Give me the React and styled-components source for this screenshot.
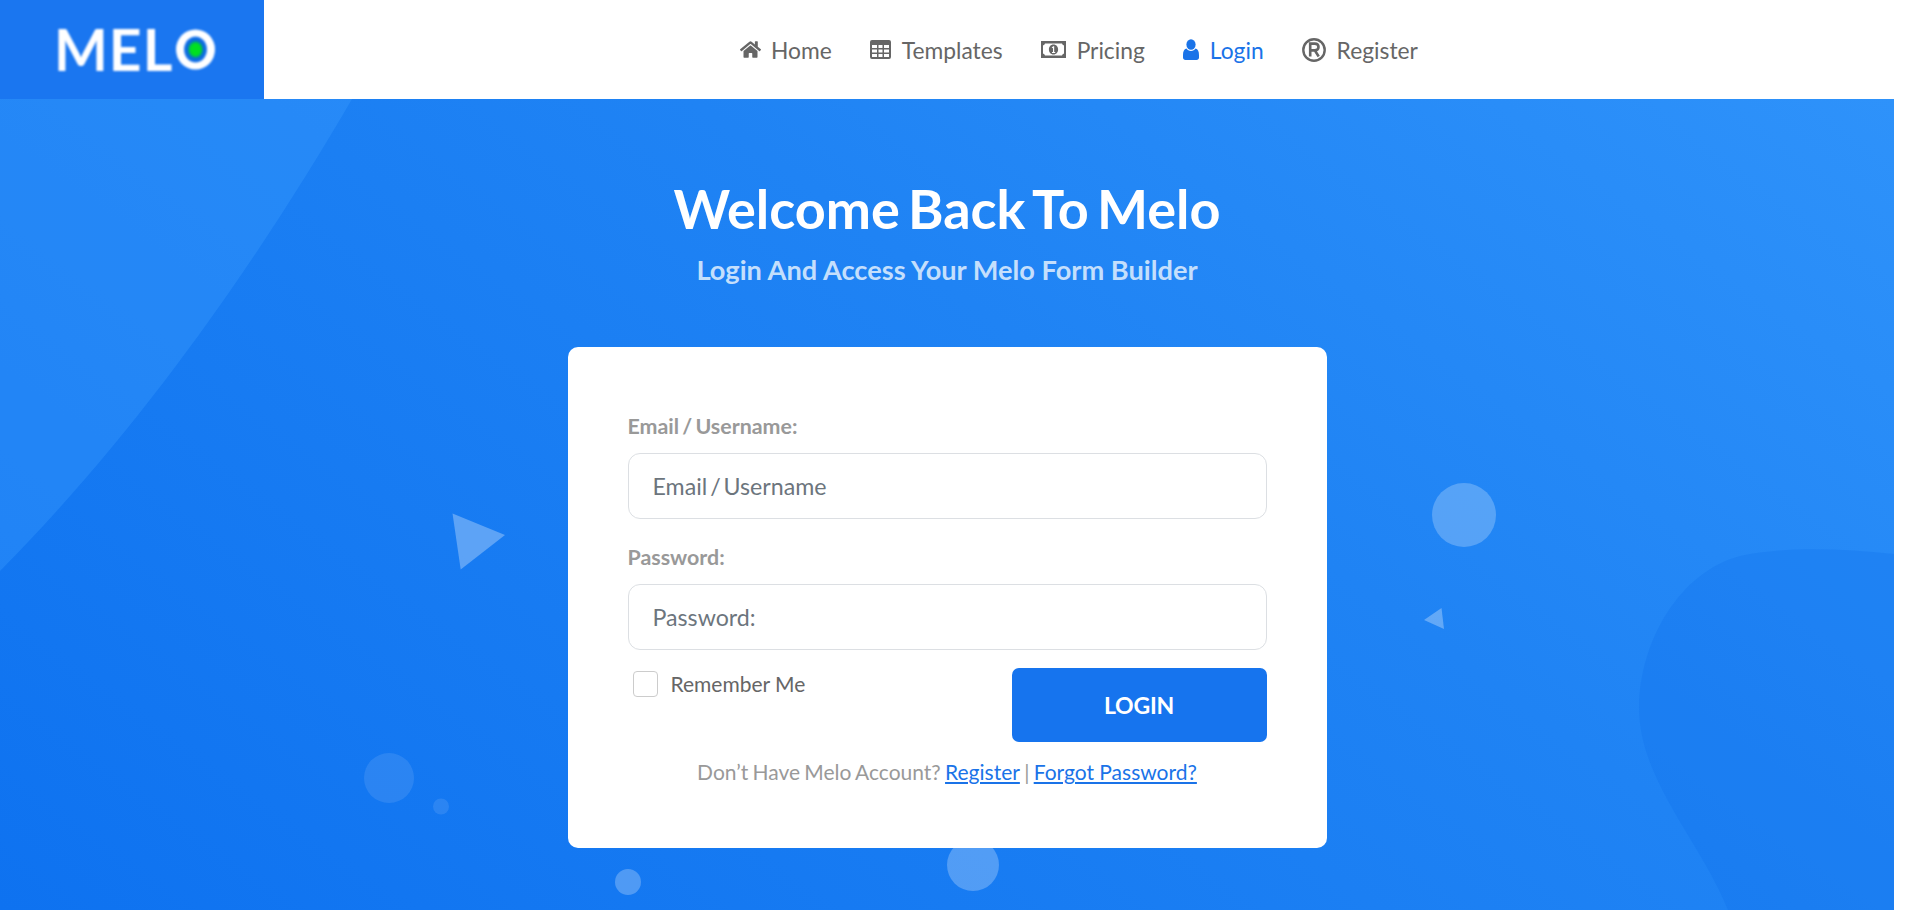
import React from "react";
import styled, { createGlobalStyle } from "styled-components";
import { FaHome } from "react-icons/fa";

const Global = createGlobalStyle`
  html, body { margin: 0; padding: 0; height: 100%; overflow: hidden; background: #fff; }
  body { font-family: Lato, "Liberation Sans", sans-serif; }
  * { box-sizing: border-box; }
  #root { height: 100%; }
`;

const Page = styled.div`
  display: flex;
  flex-direction: column;
  width: 1894px;
  height: 910px;
`;

const Header = styled.header`
  display: flex;
  align-items: center;
  flex: 0 0 99px;
  background: #fff;
`;

const LogoBlock = styled.a`
  flex: 0 0 264px;
  height: 99px;
  background: #1a76f0;
  display: flex;
  align-items: center;
  padding-left: 54px;
`;

const LogoWord = styled.span`
  display: flex;
  align-items: center;
  gap: 2px;
  color: #fff;
  font-family: Lato, sans-serif;
  font-size: 57px;
  line-height: 1;
  font-weight: 700;
  letter-spacing: 1px;
  filter: blur(0.8px);
`;

const Nav = styled.nav`
  display: flex;
  align-items: center;
  gap: 38px;
  margin-left: 476px;
`;

const NavItem = styled.a`
  display: flex;
  align-items: center;
  gap: ${(p) => p.$gap || 11}px;
  font-size: 22.8px;
  line-height: 30px;
  color: ${(p) => (p.$active ? "#1a73e8" : "#666")};
  svg { display: block; flex: none; }
`;

const Hero = styled.main`
  position: relative;
  flex: 1;
  overflow: hidden;
  display: flex;
  flex-direction: column;
  align-items: center;
  padding-top: 79px;
  background: linear-gradient(36deg, #0e72f0 0%, #1f83f4 60%, #2e92fa 100%);
`;

const Decor = styled.svg`
  position: absolute;
  inset: 0;
  width: 100%;
  height: 100%;
`;

const Title = styled.h1`
  position: relative;
  margin: 0;
  font-size: 54px;
  line-height: 62px;
  font-weight: 700;
  word-spacing: -5px;
  color: #fff;
`;

const Subtitle = styled.p`
  position: relative;
  margin: 13px 0 0;
  font-size: 27.2px;
  line-height: 34px;
  font-weight: 700;
  color: #c4dffc;
`;

const Card = styled.section`
  position: relative;
  width: 759px;
  height: 501px;
  margin-top: 60px;
  padding: 64px 60px 0;
  background: #fff;
  border-radius: 10px;
`;

const Label = styled.label`
  display: block;
  font-size: 21.4px;
  line-height: 30px;
  font-weight: 700;
  word-spacing: -2px;
  color: #999;
`;

const Input = styled.input`
  display: block;
  width: 100%;
  height: 66px;
  margin: 12px 0 ${(p) => p.$after || 0}px;
  padding: 0 24px;
  border: 1px solid #dcdfe3;
  border-radius: 12px;
  background: #fff;
  font: 400 23.2px Lato, sans-serif;
  word-spacing: -3px;
  outline: none;
  &::placeholder { color: #6c757d; opacity: 1; }
`;

const ActionRow = styled.div`
  display: flex;
  justify-content: space-between;
  align-items: flex-start;
  margin-top: 18px;
`;

const Remember = styled.label`
  display: flex;
  align-items: center;
  gap: 13px;
  margin: 3px 0 0 5px;
  font-size: 21px;
  line-height: 26px;
  color: #666;
`;

const Check = styled.input.attrs({ type: "checkbox" })`
  appearance: none;
  width: 25px;
  height: 26px;
  margin: 0;
  background: #fff;
  border: 1px solid #ccc;
  border-radius: 4px;
`;

const Submit = styled.button`
  width: 255px;
  height: 74px;
  border: 0;
  border-radius: 7px;
  background: #1674ee;
  color: #fff;
  font: 700 23px Lato, sans-serif;
  letter-spacing: -0.2px;
`;

const Foot = styled.p`
  margin: 15px 0 0;
  text-align: center;
  font-size: 21px;
  line-height: 30px;
  word-spacing: -1.1px;
  color: #999;
`;

const FootLink = styled.a`
  color: #1a73e8;
  text-decoration: underline;
  word-spacing: 0;
`;

const TableIcon = () => (
  <svg width="21" height="19" viewBox="0 0 21 19" fill="#666">
    <path fillRule="evenodd" d="M2 0h17a2 2 0 0 1 2 2v15a2 2 0 0 1-2 2H2a2 2 0 0 1-2-2V2a2 2 0 0 1 2-2zM2 5v3h5V5zm6.500 0v3h4V5zm5.500 0v3h5V5zM2 9.500v3h5v-3zm6.500 0v3h4v-3zm5.500 0v3h5v-3zM2 14v3h5v-3zm6.500 0v3h4v-3zm5.500 0v3h5v-3z" />
  </svg>
);

const MoneyIcon = () => (
  <svg width="25" height="17" viewBox="0 0 25 17" fill="#666">
    <path fillRule="evenodd" d="M0 0h25v17H0zM4 2.500a2.500 2.500 0 0 1-2 2v8a2.500 2.500 0 0 1 2 2h17a2.500 2.500 0 0 1 2-2v-8a2.500 2.500 0 0 1-2-2z" />
    <path fillRule="evenodd" d="M12.500 3.500c2.800 0 4.600 2.200 4.600 5s-1.800 5-4.600 5-4.600-2.200-4.600-5 1.800-5 4.600-5zM11 11v1h3.200v-1h-1V5.200h-1l-1.500 1.300.6.700.7-.5V11z" />
  </svg>
);

const UserIcon = () => (
  <svg width="16" height="21" viewBox="0 0 16 21" fill="#1a73e8">
    <ellipse cx="8" cy="5.500" rx="4.600" ry="5.300" />
    <path d="M3.400 9.500C4.500 11 6 12 8 12s3.500-1 4.600-2.500C15 10.200 16 12.500 16 16v2.500c0 1.500-1 2.500-2.500 2.500h-11C1 21 0 20 0 18.500V16c0-3.500 1-5.800 3.400-6.500z" />
  </svg>
);

const RegisteredIcon = () => (
  <svg width="24" height="24" viewBox="0 0 24 24" fill="none" stroke="#666">
    <circle cx="12" cy="12" r="10.700" strokeWidth="2.400" />
    <path d="M8.200 18.500V5.600h4.600c2.300 0 3.700 1.400 3.700 3.400s-1.400 3.400-3.700 3.400H8.200M12.800 12.400l3.900 6.100" strokeWidth="2.600" />
  </svg>
);

const LogoO = () => (
  <svg width="41" height="41" viewBox="0 0 41 41" style={{ display: "block" }}>
    <defs>
      <radialGradient id="logo-core">
        <stop offset="0" stopColor="#00e020" />
        <stop offset="0.45" stopColor="#00e020" />
        <stop offset="0.7" stopColor="#0868d8" />
        <stop offset="1" stopColor="#1a76f0" />
      </radialGradient>
    </defs>
    <ellipse cx="20.500" cy="20.500" rx="19.500" ry="20" fill="#fff" />
    <ellipse cx="20.500" cy="20.500" rx="11.500" ry="13" fill="url(#logo-core)" />
  </svg>
);

export default function App() {
  return (
    <>
      <Global />
      <Page>
        <Header>
          <LogoBlock>
            <LogoWord>
              MEL
              <LogoO />
            </LogoWord>
          </LogoBlock>
          <Nav>
            <NavItem $gap={10}>
              <FaHome size={21} color="#666" />
              Home
            </NavItem>
            <NavItem>
              <TableIcon />
              Templates
            </NavItem>
            <NavItem>
              <MoneyIcon />
              Pricing
            </NavItem>
            <NavItem $active>
              <UserIcon />
              Login
            </NavItem>
            <NavItem>
              <RegisteredIcon />
              Register
            </NavItem>
          </Nav>
        </Header>
        <Hero>
          <Decor viewBox="0 99 1894 811" preserveAspectRatio="none">
            <path d="M0 99H352C270 240 150 420 0 571Z" fill="#3c9dff" fillOpacity="0.35" />
            <path
              d="M1894 554C1840 549 1790 546 1740 556C1680 572 1640 640 1639 707C1639 780 1700 840 1728 910H1894Z"
              fill="#0a6be8"
              fillOpacity="0.22"
            />
            <polygon points="452.500,513.500 505,535 460.700,569.500" fill="#fff" fillOpacity="0.3" />
            <polygon points="1424,620 1441.500,608 1444,629" fill="#fff" fillOpacity="0.3" />
            <circle cx="389" cy="778" r="25" fill="#fff" fillOpacity="0.1" />
            <circle cx="441" cy="806.500" r="8" fill="#fff" fillOpacity="0.1" />
            <circle cx="1464" cy="515" r="32" fill="#fff" fillOpacity="0.24" />
            <circle cx="628" cy="882" r="13" fill="#fff" fillOpacity="0.25" />
            <circle cx="973" cy="865" r="26" fill="#fff" fillOpacity="0.25" />
          </Decor>
          <Title>Welcome Back To Melo</Title>
          <Subtitle>Login And Access Your Melo Form Builder</Subtitle>
          <Card>
            <Label>Email / Username:</Label>
            <Input placeholder="Email / Username" $after={23} />
            <Label>Password:</Label>
            <Input placeholder="Password:" />
            <ActionRow>
              <Remember>
                <Check />
                Remember Me
              </Remember>
              <Submit>LOGIN</Submit>
            </ActionRow>
            <Foot>
              Don’t Have Melo Account? <FootLink>Register</FootLink> | <FootLink>Forgot Password?</FootLink>
            </Foot>
          </Card>
        </Hero>
      </Page>
    </>
  );
}
